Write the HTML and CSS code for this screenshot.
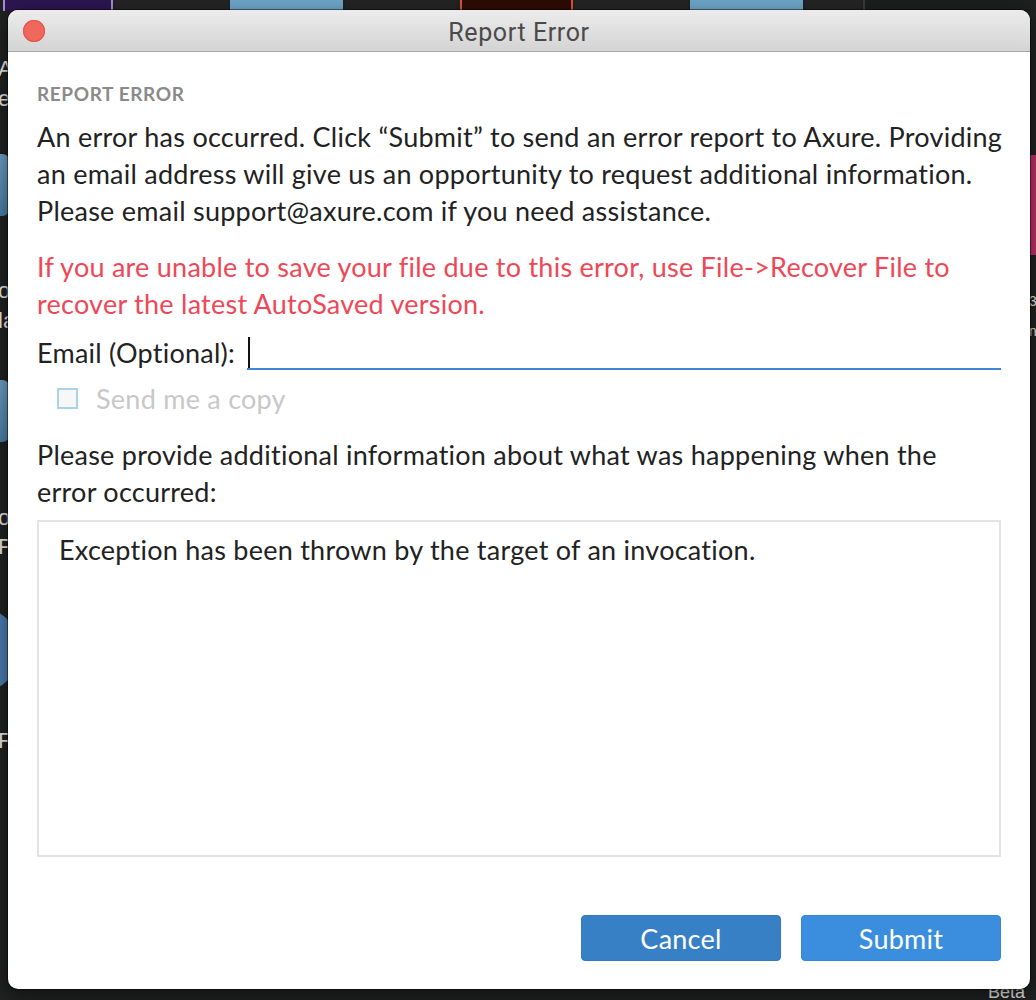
FILE: index.html
```html
<!DOCTYPE html>
<html lang="en">
<head>
    <meta charset="UTF-8">
    <title>Report Error</title>
    <link rel="stylesheet" href="styles.css">
</head>
<body>
<div class="desk">
    <div class="top-strip">
        <div class="tile purple"></div>
        <div class="tile dark"></div>
        <div class="tile blue"></div>
        <div class="tile dark"></div>
        <div class="tile rust"></div>
        <div class="tile dark"></div>
        <div class="tile blue"></div>
        <div class="tile dark short"></div>
        <div class="tile edge"></div>
    </div>
    <div class="peek peek-a">A</div>
    <div class="peek peek-e">e</div>
    <div class="side-tile side-1"></div>
    <div class="peek peek-o1">o</div>
    <div class="peek peek-la">la</div>
    <div class="side-tile side-2"></div>
    <div class="peek peek-o2">o</div>
    <div class="peek peek-pr">Pr</div>
    <div class="side-dot"></div>
    <div class="peek peek-f">F</div>
    <div class="pink-tile"></div>
    <div class="peek peek-3">3</div>
    <div class="peek peek-n">n</div>
    <div class="peek peek-beta">Beta</div>
</div>

<div class="window">
    <div class="titlebar">
        <div class="lights"><span class="close"></span></div>
        <div class="title">Report Error</div>
        <div></div>
    </div>
    <div class="content">
        <div class="heading">REPORT ERROR</div>
        <p class="intro">An error has occurred. Click “Submit” to send an error report to Axure. Providing<br>an email address will give us an opportunity to request additional information.<br>Please email support@axure.com if you need assistance.</p>
        <p class="alert">If you are unable to save your file due to this error, use File-&gt;Recover File to<br>recover the latest AutoSaved version.</p>
        <div class="email-row">
            <label for="email">Email (Optional):</label>
            <div class="field" id="email"><span class="caret"></span></div>
        </div>
        <div class="copy-row">
            <span class="checkbox"></span>
            <span class="copy-label">Send me a copy</span>
        </div>
        <p class="ask">Please provide additional information about what was happening when the<br>error occurred:</p>
        <div class="details">Exception has been thrown by the target of an invocation.</div>
        <div class="actions">
            <button class="btn cancel">Cancel</button>
            <button class="btn submit">Submit</button>
        </div>
    </div>
</div>
</body>
</html>
```

FILE: styles.css
```css
body {
    margin: 0;
    width: 1036px;
    height: 1000px;
    overflow: hidden;
    position: relative;
    background-color: #202121;
    font-family: Lato, "Open Sans", sans-serif;
}
.desk {
    position: absolute;
    top: 0;
    left: 0;
    width: 100%;
    height: 100%;
}
.top-strip {
    display: flex;
    height: 11px;
    padding-left: 3px;
}
.tile {
    width: 113px;
    margin-right: 2px;
    box-sizing: border-box;
}
.tile.purple {
    width: 110px;
    background-color: #2c1650;
    border-left: 2px solid #a98bd8;
    border-right: 2px solid #a98bd8;
}
.tile.dark {
    background-color: #232423;
}
.tile.short {
    width: 56px;
}
.tile.blue {
    background-color: #6ea6c8;
}
.tile.rust {
    background-color: #2c0c05;
    border-left: 2px solid #e4522e;
    border-right: 2px solid #e4522e;
}
.tile.edge {
    flex: 1;
    background-color: #1d1e1e;
    border-left: 2px solid #3a3b3b;
}
.peek {
    position: absolute;
    left: -2px;
    color: #e6e6e6;
    font-family: "Liberation Sans", sans-serif;
    font-size: 22px;
    line-height: 26px;
}
.peek-a { top: 56px; }
.peek-e { top: 86px; }
.peek-o1 { top: 278px; }
.peek-la { top: 308px; }
.peek-o2 { top: 505px; }
.peek-pr { top: 534px; }
.peek-f { top: 728px; }
.peek-3 { left: 1029px; top: 288px; font-size: 14px; }
.peek-n { left: 1029px; top: 318px; font-size: 14px; }
.peek-beta { left: 988px; top: 985px; font-size: 18px; line-height: 15px; }
.side-tile {
    position: absolute;
    left: -40px;
    width: 50px;
    height: 62px;
    border-radius: 8px;
    background: linear-gradient(#6d9fc4, #4a7ea6);
}
.side-1 { top: 154px; }
.side-2 { top: 380px; }
.side-dot {
    position: absolute;
    left: -60px;
    top: 608px;
    width: 80px;
    height: 84px;
    border-radius: 50%;
    background-color: #4b7cb0;
}
.pink-tile {
    position: absolute;
    left: 1028px;
    top: 155px;
    width: 40px;
    height: 100px;
    background-color: #bd2f69;
}

.window {
    position: absolute;
    left: 8px;
    top: 10px;
    width: 1022px;
    height: 979px;
    background-color: #ffffff;
    border-radius: 10px;
    overflow: hidden;
    box-shadow: 0 0 0 1px rgba(0, 0, 0, 0.45), 0 6px 20px rgba(0, 0, 0, 0.5);
}
.titlebar {
    display: grid;
    grid-template-columns: 1fr auto 1fr;
    align-items: center;
    height: 41px;
    background: linear-gradient(#ececec, #d4d4d4);
    border-bottom: 1px solid #a6a6a6;
}
.lights {
    padding-left: 15px;
    display: flex;
}
.close {
    width: 22px;
    height: 22px;
    border-radius: 50%;
    background-color: #f0675c;
    box-shadow: inset 0 0 0 1px #e0554b;
}
.title {
    padding-top: 3px;
    font-family: Roboto, "Liberation Sans", sans-serif;
    font-size: 25px;
    letter-spacing: 0.6px;
    color: #4a4a4a;
}
.content {
    padding: 30px 29px 0 29px;
    color: #222222;
    font-size: 27px;
    letter-spacing: 0.25px;
}
.heading {
    font-size: 19px;
    line-height: 24px;
    font-weight: bold;
    color: #8a8a8a;
    letter-spacing: 0.6px;
}
.content p {
    margin: 0;
    line-height: 37px;
    white-space: nowrap;
}
.intro {
    margin-top: 12px !important;
}
.alert {
    margin-top: 19px !important;
    color: #ee4857;
}
.email-row {
    display: flex;
    align-items: center;
    height: 36px;
    margin-top: 12px;
}
.email-row label {
    margin-right: 12px;
}
.field {
    flex: 1;
    align-self: stretch;
    display: flex;
    align-items: center;
    border-bottom: 2px solid #3d86d5;
}
.caret {
    width: 2px;
    height: 31px;
    margin-left: 1px;
    margin-top: 2px;
    background-color: #111111;
}
.copy-row {
    display: flex;
    align-items: center;
    height: 24px;
    margin-top: 16px;
    padding-left: 20px;
}
.checkbox {
    width: 17px;
    height: 17px;
    border: 2px solid #a9d3e7;
    background-color: #f7f7f7;
    margin-right: 18px;
}
.copy-label {
    color: #c8c8c8;
}
.ask {
    margin-top: 26px !important;
}
.details {
    margin-top: 10px;
    height: 337px;
    box-sizing: border-box;
    border: 2px solid #e3e3e3;
    padding: 9px 20px;
    line-height: 37px;
}
.actions {
    display: flex;
    justify-content: flex-end;
    gap: 20px;
    margin-top: 58px;
}
.btn {
    width: 200px;
    height: 46px;
    border-radius: 4px;
    color: #ffffff;
    font-family: inherit;
    font-size: 27px;
    letter-spacing: 0.25px;
    cursor: pointer;
}
.cancel {
    background-color: #3780c6;
    border: 1px solid #3479bd;
}
.submit {
    background-color: #3b8edd;
    border: 1px solid #3386d8;
}
```
